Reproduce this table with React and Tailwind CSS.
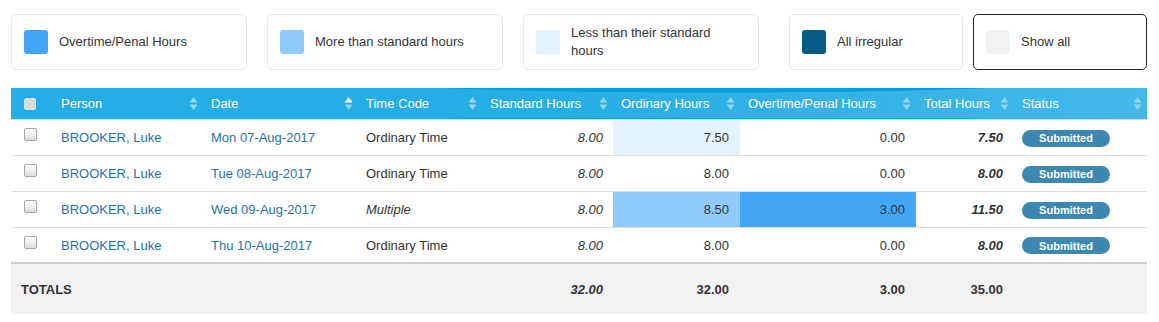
import React from "react";

const legend = [
  { label: "Overtime/Penal Hours", swatch: "bg-[#42a5f5]", width: "w-[236px]" },
  { label: "More than standard hours", swatch: "bg-[#90caf9]", width: "w-[236px]" },
  { label: "Less than their standard", label2: "hours", swatch: "bg-[#e3f2fd]", width: "w-[236px]" },
  { label: "All irregular", swatch: "bg-[#045c86]", width: "w-[174px]", gap: "ml-[30px]" },
  { label: "Show all", swatch: "bg-[#f2f2f2]", width: "w-[174px]", active: true },
];

const rows = [
  { date: "Mon 07-Aug-2017", code: "Ordinary Time", std: "8.00", ord: "7.50", ot: "0.00", total: "7.50", ordBg: "bg-[#e3f2fd]" },
  { date: "Tue 08-Aug-2017", code: "Ordinary Time", std: "8.00", ord: "8.00", ot: "0.00", total: "8.00" },
  { date: "Wed 09-Aug-2017", code: "Multiple", italic: true, std: "8.00", ord: "8.50", ot: "3.00", total: "11.50", ordBg: "bg-[#90caf9]", otBg: "bg-[#42a5f5]" },
  { date: "Thu 10-Aug-2017", code: "Ordinary Time", std: "8.00", ord: "8.00", ot: "0.00", total: "8.00" },
];

const columns = [
  { label: "Person", width: "w-[150px]" },
  { label: "Date", width: "w-[155px]", sorted: true },
  { label: "Time Code", width: "w-[124px]" },
  { label: "Standard Hours", width: "w-[131px]" },
  { label: "Ordinary Hours", width: "w-[127px]" },
  { label: "Overtime/Penal Hours", width: "w-[176px]" },
  { label: "Total Hours", width: "w-[98px]" },
  { label: "Status", width: "w-[133px]" },
];

function SortIcon({ active }) {
  return (
    <svg width="9" height="15" viewBox="0 0 9 15" className="shrink-0">
      <path d="M4.5 1L8.5 6.5H0.5Z" fill={active ? "#ffffff" : "#93d4f3"} />
      <path d="M4.5 14L8.5 8.5H0.5Z" fill="#93d4f3" />
    </svg>
  );
}

function Checkbox({ header }) {
  return (
    <div
      className={
        header
          ? "mt-[2px] h-[12px] w-[12px] rounded-[2px] border border-[#c9e6f5] bg-[#dcdcdc]"
          : "h-[13px] w-[13px] rounded-[2px] border border-[#a6a6a6] bg-[linear-gradient(#ffffff,#dedede)]"
      }
    />
  );
}

export default function App() {
  return (
    <div className="h-[322px] w-[1159px] bg-white font-['Liberation_Sans',Arial,sans-serif] text-[13px] text-[#333]">
      <div className="flex px-[11px] pt-[14px]">
        {legend.map((item, i) => (
          <div
            key={item.label}
            className={`flex h-[56px] shrink-0 items-center gap-[11px] rounded-[5px] border px-[12px] ${item.width} ${
              item.active ? "border-[#222] ml-[10px]" : "border-[#e8e8e8]"
            } ${i > 0 && !item.active && !item.gap ? "ml-[20px]" : ""} ${item.gap || ""}`}
          >
            <span className={`h-[24px] w-[24px] shrink-0 rounded-[3px] ${item.swatch}`} />
            <span className="leading-[18px]">
              {item.label}
              {item.label2 && (
                <>
                  <br />
                  {item.label2}
                </>
              )}
            </span>
          </div>
        ))}
      </div>

      <table className="ml-[11px] mt-[18px] w-[1136px] table-fixed border-collapse">
        <thead>
          <tr className="h-[31px] border-b border-[#dcdcdc] bg-[#27ade5] bg-[radial-gradient(ellipse_60%_90%_at_62%_-35%,#079fe0_0%,#079fe0_55%,transparent_57%),linear-gradient(to_right,#27ade5_48%,#43b8e9)] text-white">
            <th className="w-[42px] pl-[13px] text-left font-normal">
              <Checkbox header />
            </th>
            {columns.map((col) => (
              <th key={col.label} className={`${col.width} p-0 text-left font-normal`}>
                <div className="flex items-center justify-between pl-[8px] pr-[5px]">
                  <span className="whitespace-nowrap">{col.label}</span>
                  <SortIcon active={col.sorted} />
                </div>
              </th>
            ))}
          </tr>
        </thead>
        <tbody>
          {rows.map((row, i) => (
            <tr key={row.date} className={`h-[36px] ${i < rows.length - 1 ? "border-b border-[#dddddd]" : ""}`}>
              <td className="pl-[13px] pt-[8px] align-top">
                <Checkbox />
              </td>
              <td className="pl-[8px] pt-[2px] text-[#1f72ad]">BROOKER, Luke</td>
              <td className="pl-[8px] pt-[2px] text-[#1f72ad]">{row.date}</td>
              <td className={`pl-[8px] pt-[2px] ${row.italic ? "italic" : ""}`}>{row.code}</td>
              <td className="pr-[10px] pt-[2px] text-right italic">{row.std}</td>
              <td className={`pr-[11px] pt-[2px] text-right ${row.ordBg || ""}`}>{row.ord}</td>
              <td className={`pr-[11px] pt-[2px] text-right ${row.otBg || ""}`}>{row.ot}</td>
              <td className="pr-[11px] pt-[2px] text-right font-bold italic">{row.total}</td>
              <td className="pl-[8px] pt-[2px]">
                <span className="flex h-[17px] w-[88px] items-center justify-center rounded-full bg-[#3c88b0] text-[11px] font-bold text-white">
                  Submitted
                </span>
              </td>
            </tr>
          ))}
          <tr className="h-[51px] border-t-2 border-[#cccccc] bg-[#f2f2f2] font-bold">
            <td colSpan={4} className="pl-[10px] pt-[1px] uppercase">
              Totals
            </td>
            <td className="pr-[10px] pt-[1px] text-right italic">32.00</td>
            <td className="pr-[11px] pt-[1px] text-right">32.00</td>
            <td className="pr-[11px] pt-[1px] text-right">3.00</td>
            <td className="pr-[11px] pt-[1px] text-right">35.00</td>
            <td />
          </tr>
        </tbody>
      </table>
    </div>
  );
}
